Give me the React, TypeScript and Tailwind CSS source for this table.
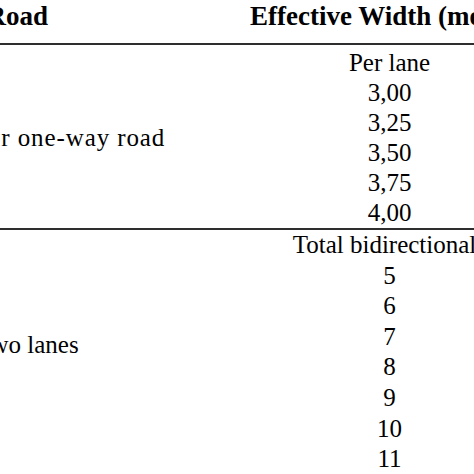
const perLane = ["3,00", "3,25", "3,50", "3,75", "4,00"];
const total = ["5", "6", "7", "8", "9", "10", "11"];

export default function App() {
  return (
    <div
      className="w-[474px] h-[474px] overflow-hidden bg-white text-black"
      style={{ fontFamily: '"Liberation Serif", "Times New Roman", serif' }}
    >
      <div className="ml-[-23px] w-[522px]">
        {/* header */}
        <div className="grid grid-cols-[303px_219px] border-b-2 border-[#2e2e2e] pt-[1px] pb-[12px] text-[27px] leading-[30px] font-bold">
          <div className="whitespace-nowrap">
            <span className="ml-[-83px]">Type of Road</span>
          </div>
          <div className="whitespace-nowrap">
            <span className="ml-[-30px]">Effective Width (meters)</span>
          </div>
        </div>

        {/* one-way */}
        <div className="grid grid-cols-[303px_219px] border-b-2 border-[#2e2e2e] pt-[3px] text-[25px] leading-[30px]">
          <div className="whitespace-nowrap pt-[75px]">
            <span className="ml-[-93px] tracking-[0.9px]">One lane or one-way road</span>
          </div>
          <div className="flex flex-col items-center whitespace-nowrap">
            <div>Per lane</div>
            {perLane.map((v) => (
              <div key={v}>{v}</div>
            ))}
          </div>
        </div>

        {/* two lanes */}
        <div className="grid grid-cols-[303px_219px] text-[25px] leading-[30.6px]">
          <div className="whitespace-nowrap pt-[100px]">Two lanes</div>
          <div className="flex flex-col items-center whitespace-nowrap">
            <div className="mr-[10px]">Total bidirectional</div>
            {total.map((v) => (
              <div key={v}>{v}</div>
            ))}
          </div>
        </div>
      </div>
    </div>
  );
}
